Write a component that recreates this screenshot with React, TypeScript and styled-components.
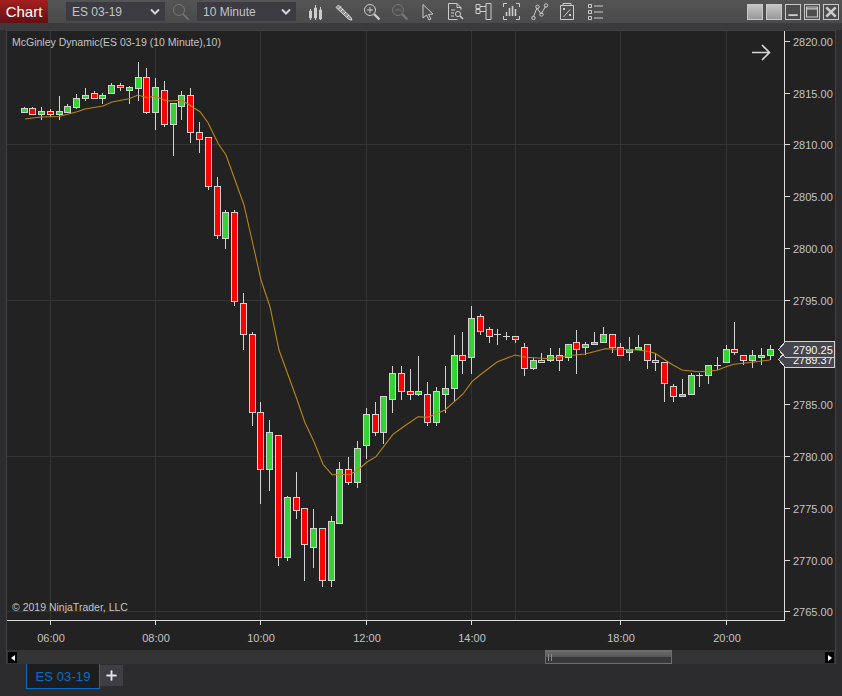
import React from "react"
import styled, { createGlobalStyle } from "styled-components"
import { Plus } from "lucide-react"

// x, wick top, body top, body bottom, wick bottom, kind
type Bar = [number, number, number, number, number, "g" | "r" | "d"]

const bars: Bar[] = [
    [24, 107, 108, 112, 112, "g"], [32, 107, 108, 114, 114, "r"], [41, 107, 111, 114, 120, "g"],
    [50, 109, 111, 114, 117, "r"], [59, 96, 111, 114, 120, "g"], [67, 104, 106, 112, 112, "g"],
    [76, 94, 98, 107, 109, "g"], [85, 88, 95, 98, 101, "g"], [94, 91, 93, 98, 98, "r"],
    [102, 93, 95, 98, 104, "g"], [111, 83, 85, 93, 93, "g"], [120, 83, 85, 87, 91, "r"],
    [129, 86, 87, 90, 104, "g"], [138, 62, 77, 88, 101, "g"], [146, 68, 77, 112, 114, "r"],
    [155, 78, 87, 112, 130, "g"], [164, 81, 90, 124, 127, "r"], [173, 103, 103, 124, 156, "g"],
    [181, 91, 95, 106, 120, "g"], [190, 88, 95, 132, 143, "r"], [199, 122, 132, 139, 153, "r"],
    [208, 137, 137, 186, 190, "r"], [217, 177, 186, 235, 239, "r"], [225, 210, 212, 238, 249, "g"],
    [234, 210, 212, 301, 306, "r"], [243, 293, 303, 334, 350, "r"], [252, 332, 334, 412, 426, "r"],
    [260, 402, 412, 469, 504, "r"], [269, 420, 432, 469, 491, "g"], [278, 435, 435, 557, 566, "r"],
    [287, 496, 497, 557, 561, "g"], [296, 472, 497, 510, 519, "r"], [304, 508, 508, 544, 581, "r"],
    [313, 509, 528, 547, 568, "g"], [322, 528, 528, 580, 587, "r"], [331, 516, 521, 580, 587, "g"],
    [339, 462, 469, 523, 523, "g"], [348, 457, 469, 482, 485, "r"], [357, 441, 448, 482, 488, "g"],
    [366, 408, 414, 445, 459, "g"], [375, 402, 414, 432, 436, "r"], [383, 396, 396, 432, 444, "g"],
    [392, 366, 373, 399, 413, "g"], [401, 366, 373, 391, 400, "r"], [410, 369, 391, 394, 400, "r"],
    [418, 356, 391, 394, 396, "g"], [427, 382, 394, 422, 426, "r"], [436, 387, 391, 422, 426, "g"],
    [445, 366, 388, 394, 413, "g"], [454, 335, 355, 388, 401, "g"], [462, 332, 355, 360, 374, "r"],
    [471, 306, 318, 357, 374, "g"], [480, 314, 316, 331, 335, "r"], [489, 327, 329, 336, 343, "r"],
    [497, 329, 334, 334, 345, "d"], [506, 332, 336, 336, 340, "d"], [515, 336, 336, 339, 343, "r"],
    [524, 343, 347, 368, 376, "r"], [533, 358, 360, 368, 370, "g"], [541, 353, 360, 362, 362, "r"],
    [550, 348, 355, 360, 362, "g"], [559, 348, 355, 360, 371, "r"], [568, 344, 344, 357, 361, "g"],
    [576, 330, 342, 349, 374, "r"], [585, 342, 344, 347, 355, "g"], [594, 332, 342, 344, 344, "g"],
    [603, 327, 334, 342, 342, "g"], [612, 334, 334, 347, 353, "r"], [620, 343, 347, 355, 355, "r"],
    [629, 337, 349, 352, 361, "g"], [638, 335, 347, 349, 349, "g"], [647, 344, 344, 360, 369, "r"],
    [655, 353, 360, 362, 371, "r"], [664, 362, 362, 383, 402, "r"], [673, 384, 386, 396, 402, "r"],
    [682, 379, 394, 396, 396, "g"], [691, 373, 375, 394, 394, "g"], [699, 373, 375, 375, 387, "d"],
    [708, 365, 365, 375, 384, "g"], [717, 357, 365, 365, 370, "d"], [726, 345, 349, 362, 362, "g"],
    [734, 322, 349, 352, 355, "r"], [743, 355, 355, 360, 365, "r"], [752, 350, 355, 360, 368, "g"],
    [761, 348, 355, 357, 365, "g"], [770, 345, 349, 355, 360, "g"],
]

const mcGinley = "25,119 41,117 59,116.5 77,111.7 85,109 103,106 112,102 129,98.7 138,95 147,97.7 155,96 164,100 170,101 182,100.3 191,106 200,111.7 208,122.7 218,143.3 226,155 235,180 244,205 254,249 261,280 270,306.7 279,350 297,399.5 305,422.7 314,441.7 323,464.3 332,474.7 350,474.3 357,470.7 367,462 376,456.7 393,434.3 402,427.7 418,416.7 428,417.3 445,410 463,394 472,381.7 480,375 497,362 515,355 526,357.3 550,358.7 568,355.7 585,354 594,351.7 605,348.7 638,350 647,351.3 655,353.3 664,359.3 673,365 682,370 699,371.7 717,370.3 726,366.7 734,364.3 752,362.3 770,360"

const gridX = [50, 155, 260, 366, 471, 515, 620, 726]
const gridY = [144, 300, 456, 611]
const timeLabels: [number, string][] = [[50, "06:00"], [155, "08:00"], [260, "10:00"], [366, "12:00"], [471, "14:00"], [620, "18:00"], [726, "20:00"]]
const priceLabels: [string, number][] = [
    ["2820.00", 41], ["2815.00", 93], ["2810.00", 144], ["2805.00", 196], ["2800.00", 248], ["2795.00", 300],
    ["2785.00", 404], ["2780.00", 456], ["2775.00", 508], ["2770.00", 560], ["2765.00", 611],
]

const GlobalStyle = createGlobalStyle`
    html, body {
        margin: 0;
        padding: 0;
        background: #2c2c2e;
    }
    body {
        font-family: "Liberation Sans", Arial, sans-serif;
    }
`

const Page = styled.div`
    width: 842px;
    height: 696px;
    overflow: hidden;
    display: flex;
    flex-direction: column;
    background: #2c2c2e;
`

const Toolbar = styled.div`
    height: 24px;
    flex: none;
    display: flex;
    align-items: flex-start;
    background: linear-gradient(#545454, #4a4a4a);
    border-bottom: 1px solid #3c3c3c;
    box-sizing: border-box;
`

const ChartTitle = styled.div`
    width: 48px;
    height: 23px;
    display: flex;
    align-items: center;
    justify-content: center;
    margin-right: 18px;
    color: #fff;
    font-size: 15px;
    background: linear-gradient(#a3201f, #651014);
`

const Dropdown = styled.div`
    width: 99px;
    height: 19px;
    margin-top: 2px;
    padding: 0 4px 0 6px;
    box-sizing: border-box;
    display: flex;
    align-items: center;
    justify-content: space-between;
    color: #c4c4c4;
    font-size: 12px;
    background: #3b3b41;
`

const SearchSlot = styled.div`
    width: 32px;
    height: 23px;
    display: flex;
    align-items: center;
    justify-content: center;
`

const ToolGroup = styled.div`
    display: flex;
    margin-left: 6px;
`

const ToolSlot = styled.div`
    width: 28px;
    height: 23px;
    display: flex;
    align-items: center;
    justify-content: center;
`

const WindowButtons = styled.div`
    display: flex;
    gap: 3px;
    margin-left: auto;
    margin-right: 3px;
    margin-top: 4px;
`

const WindowButton = styled.div<{ $blank?: boolean }>`
    width: 16px;
    height: 16px;
    box-sizing: border-box;
    border: 1px solid #c8c8c8;
    background: ${p => (p.$blank ? "linear-gradient(#c4c4c4, #989898)" : "#4c4c4c")};
    display: flex;
    align-items: center;
    justify-content: center;
`

const ToolbarGap = styled.div`
    height: 6px;
    flex: none;
    background: #3a3a3c;
`

const ChartPanel = styled.div`
    margin: 0 6px 0 6px;
    height: 634px;
    flex: none;
    box-sizing: border-box;
    border: 1px solid #414143;
    display: flex;
    flex-direction: column;
`

const ChartSvg = styled.svg`
    display: block;
    flex: none;
    background: #222222;
    shape-rendering: crispEdges;
`

const GridLine = styled.line`
    stroke: #343434;
    stroke-width: 1;
`

const AxisLine = styled.line`
    stroke: #dcdcdc;
    stroke-width: 1;
`

const Wick = styled.rect`
    fill: #d2d2d2;
`

const CandleBody = styled.rect<{ $kind: string }>`
    fill: ${p => (p.$kind === "g" ? "#32d332" : "#ff0000")};
    stroke: #d2d2d2;
    stroke-width: 1;
`

const MaLine = styled.polyline`
    fill: none;
    stroke: #b8861b;
    stroke-width: 1.1;
    shape-rendering: geometricPrecision;
`

const ChartText = styled.text<{ $small?: boolean }>`
    font-family: "Liberation Sans", Arial, sans-serif;
    font-size: ${p => (p.$small ? "10.5px" : "11px")};
    fill: #c4c4c4;
    shape-rendering: geometricPrecision;
`

const TagShape = styled.polygon`
    fill: #45454d;
    stroke: #d2d2d2;
    stroke-width: 1;
`

const TagText = styled.text`
    font-family: "Liberation Sans", Arial, sans-serif;
    font-size: 11px;
    fill: #f4f4f4;
`

const ScrollTrack = styled.div`
    height: 14px;
    flex: none;
    display: flex;
    align-items: center;
    background: #343434;
    padding: 0 1px;
`

const ScrollArrow = styled.div<{ $right?: boolean }>`
    width: 9px;
    height: 11px;
    margin-top: 1px;
    background: #000;
    margin-left: ${p => (p.$right ? "auto" : "0")};
    display: flex;
    align-items: center;
    justify-content: center;
`

const ArrowTip = styled.div<{ $right?: boolean }>`
    width: 0;
    height: 0;
    border-top: 3px solid transparent;
    border-bottom: 3px solid transparent;
    border-${p => (p.$right ? "left" : "right")}: 4px solid #fff;
`

const ScrollThumb = styled.div`
    width: 127px;
    height: 14px;
    margin-left: 528px;
    box-sizing: border-box;
    border: 1px solid #6e6e6e;
    background: linear-gradient(#6c6c6c 0, #555 50%, #363636 50%, #383838 100%);
    display: flex;
    align-items: center;
    gap: 2px;
    padding-left: 2px;
`

const ThumbGrip = styled.div`
    width: 1px;
    height: 7px;
    background: #8a8a8a;
`

const TabBar = styled.div`
    display: flex;
    align-items: flex-start;
    padding-left: 26px;
`

const ActiveTab = styled.div`
    width: 74px;
    height: 25px;
    box-sizing: border-box;
    border: 1px solid #0a6cc0;
    border-top: 0;
    background: #1d1d1e;
    color: #0a6fc6;
    font-size: 13px;
    letter-spacing: 0.1px;
    display: flex;
    align-items: center;
    justify-content: center;
`

const AddTab = styled.div`
    width: 23px;
    height: 21px;
    margin-top: 1px;
    background: #3e3e44;
    color: #e4e4e4;
    display: flex;
    align-items: center;
    justify-content: center;
`

const IconSvg = styled.svg<{ $dim?: boolean }>`
    display: block;
    fill: none;
    stroke: ${p => (p.$dim ? "#787878" : "#cccccc")};
    stroke-width: 1;
`

function Icon({ dim, size = 18, children }: { dim?: boolean; size?: number; children: React.ReactNode }) {
    return (
        <IconSvg $dim={dim} width={size} height={size} viewBox="0 0 18 18">
            {children}
        </IconSvg>
    )
}

function Chevron() {
    return (
        <svg width="12" height="8" viewBox="0 0 12 8">
            <path d="M2 1.5 L6 5.5 L10 1.5" fill="none" stroke="#d4d4d4" strokeWidth="2" />
        </svg>
    )
}

const tools: React.ReactNode[] = [
    <Icon key="bars">
        <path d="M3.5 6v11M8.5 2v15M13.5 4v13" />
        <path d="M2.5 8h2v7h-2zM7.5 5h2v10h-2zM12.5 7h2v9h-2z" fill="#cccccc" />
    </Icon>,
    <Icon key="pencil">
        <path d="M1 4.5 L3.5 2 L16 14.5 L17 17 L14 16.5 Z" fill="#8e8e8e" stroke="#d8d8d8" />
        <path d="M3.5 6 L6 3.5 M6 8 L8 6 M9 11 L11 9 M12 14 L14 12" stroke="#f0f0f0" />
    </Icon>,
    <Icon key="zoomin">
        <circle cx="7" cy="7" r="5.5" />
        <path d="M7 4v6M4 7h6" />
        <path d="M11 11 L16.5 16.5" strokeWidth="2.4" />
    </Icon>,
    <Icon key="zoomout" dim>
        <circle cx="7" cy="7" r="5.5" />
        <path d="M4 7h6" />
        <path d="M11 11 L16.5 16.5" strokeWidth="2.4" />
    </Icon>,
    <Icon key="cursor">
        <path d="M4 1.5 L4 15 L7.5 12 L10 17 L12 16 L9.5 11.5 L14 11 Z" />
    </Icon>,
    <Icon key="docsearch">
        <path d="M10.5 16.5H1.5V.5H10L14 4.5V7" />
        <path d="M10 .5V4.5H14M4 7h4M4 10h3M4 13h3" />
        <circle cx="11" cy="11" r="2.6" />
        <path d="M13 13l3 3" strokeWidth="1.6" />
    </Icon>,
    <Icon key="template">
        <path d="M1 1.5h4v4h-4zM1 6.5h4v4h-4zM5 3.5h6M5 8.5h6" />
        <path d="M11 .5h5v16h-5z" />
    </Icon>,
    <Icon key="barsframe">
        <path d="M4 .5H.5V4M13 .5h3.5V4M4 16.5H.5V13M13 16.5h3.5V13" />
        <path d="M3.5 13V9M6.5 13V5M9.5 13V3M12.5 13V6" strokeWidth="1.6" />
    </Icon>,
    <Icon key="nodes">
        <path d="M2.5 13.5 L6 5 L10 11 L14.5 3.5" />
        <circle cx="2.5" cy="15" r="1.7" />
        <circle cx="6.5" cy="3.8" r="1.7" />
        <circle cx="10.5" cy="11.5" r="1.7" />
        <circle cx="15" cy="2.5" r="1.7" />
    </Icon>,
    <Icon key="docx">
        <path d="M1.5 2.5h13v14h-13zM4 .5h8v2H4z" />
        <path d="M4 5l2 2M6 5l-2 2M10 11l2 2M12 11l-2 2M4.5 14L11 6.5" />
    </Icon>,
    <Icon key="list">
        <path d="M1.5 1.5h3v3h-3zM1.5 7.5h3v3h-3zM1.5 13.5h3v3h-3zM7 3h9M7 9h9M7 15h9" />
    </Icon>,
]

function Candle({ bar }: { bar: Bar }) {
    const [x, wickTop, bodyTop, bodyBottom, wickBottom, kind] = bar
    if (kind === "d") {
        return (
            <g>
                <Wick x={x} y={wickTop} width={1} height={wickBottom - wickTop} />
                <Wick x={x - 3} y={bodyTop} width={7} height={1} />
            </g>
        )
    }
    return (
        <g>
            <Wick x={x} y={wickTop} width={1} height={wickBottom - wickTop} />
            <CandleBody $kind={kind} x={x - 2.5} y={bodyTop + 0.5} width={6} height={bodyBottom - bodyTop} />
        </g>
    )
}

function PriceTag({ y, text }: { y: number; text: string }) {
    return (
        <g>
            <TagShape points={`778.5,${y + 0.5} 785.5,${y - 7.5} 834.5,${y - 7.5} 834.5,${y + 8.5} 785.5,${y + 8.5}`} />
            <TagText x={793} y={y + 5}>{text}</TagText>
        </g>
    )
}

function Chart() {
    return (
        <ChartSvg width={828} height={619} viewBox="7 31 828 619">
            {gridX.map(x => <GridLine key={x} x1={x + 0.5} x2={x + 0.5} y1={31} y2={620} />)}
            {gridY.map(y => <GridLine key={y} x1={7} x2={785} y1={y + 0.5} y2={y + 0.5} />)}

            <ChartText $small x={12} y={46}>McGinley Dynamic(ES 03-19 (10 Minute),10)</ChartText>
            <ChartText $small x={12} y={611}>© 2019 NinjaTrader, LLC</ChartText>

            {bars.map(b => <Candle key={b[0]} bar={b} />)}
            <MaLine points={mcGinley} />

            <path d="M752 52.5 H769 M762 45 L769.5 52.5 L762 60" fill="none" stroke="#d8d8d8" strokeWidth="1.6" shapeRendering="geometricPrecision" />

            <AxisLine x1={784.5} x2={784.5} y1={31} y2={621} />
            <AxisLine x1={7} x2={785} y1={620.5} y2={620.5} />

            {priceLabels.map(([label, y]) => (
                <g key={label}>
                    <AxisLine x1={785} x2={790} y1={y + 0.5} y2={y + 0.5} />
                    <ChartText x={793} y={y + 5}>{label}</ChartText>
                </g>
            ))}
            {timeLabels.map(([x, label]) => (
                <g key={label}>
                    <AxisLine x1={x + 0.5} x2={x + 0.5} y1={621} y2={625} />
                    <ChartText x={x + 1} y={642} textAnchor="middle">{label}</ChartText>
                </g>
            ))}

            <PriceTag y={359} text="2789.37" />
            <PriceTag y={349} text="2790.25" />
        </ChartSvg>
    )
}

export default function App() {
    return (
        <Page>
            <GlobalStyle />
            <Toolbar>
                <ChartTitle>Chart</ChartTitle>
                <Dropdown>ES 03-19<Chevron /></Dropdown>
                <SearchSlot>
                    <Icon dim>
                        <circle cx="7" cy="7" r="5.5" />
                        <path d="M11 11 L16.5 16.5" strokeWidth="1.6" />
                    </Icon>
                </SearchSlot>
                <Dropdown>10 Minute<Chevron /></Dropdown>
                <ToolGroup>
                    {tools.map((t, i) => <ToolSlot key={i}>{t}</ToolSlot>)}
                </ToolGroup>
                <WindowButtons>
                    <WindowButton $blank />
                    <WindowButton $blank />
                    <WindowButton>
                        <Icon size={14}><path d="M3 13h12" strokeWidth="2.4" /></Icon>
                    </WindowButton>
                    <WindowButton>
                        <Icon size={14}><path d="M2 2.5h14v13H2zM2 5h14" strokeWidth="1.4" /></Icon>
                    </WindowButton>
                    <WindowButton>
                        <Icon size={14}><path d="M3 3l12 12M15 3L3 15" strokeWidth="3.4" /></Icon>
                    </WindowButton>
                </WindowButtons>
            </Toolbar>
            <ToolbarGap />
            <ChartPanel>
                <Chart />
                <ScrollTrack>
                    <ScrollArrow><ArrowTip /></ScrollArrow>
                    <ScrollThumb><ThumbGrip /><ThumbGrip /></ScrollThumb>
                    <ScrollArrow $right><ArrowTip $right /></ScrollArrow>
                </ScrollTrack>
            </ChartPanel>
            <TabBar>
                <ActiveTab>ES 03-19</ActiveTab>
                <AddTab><Plus size={15} strokeWidth={3} /></AddTab>
            </TabBar>
        </Page>
    )
}
